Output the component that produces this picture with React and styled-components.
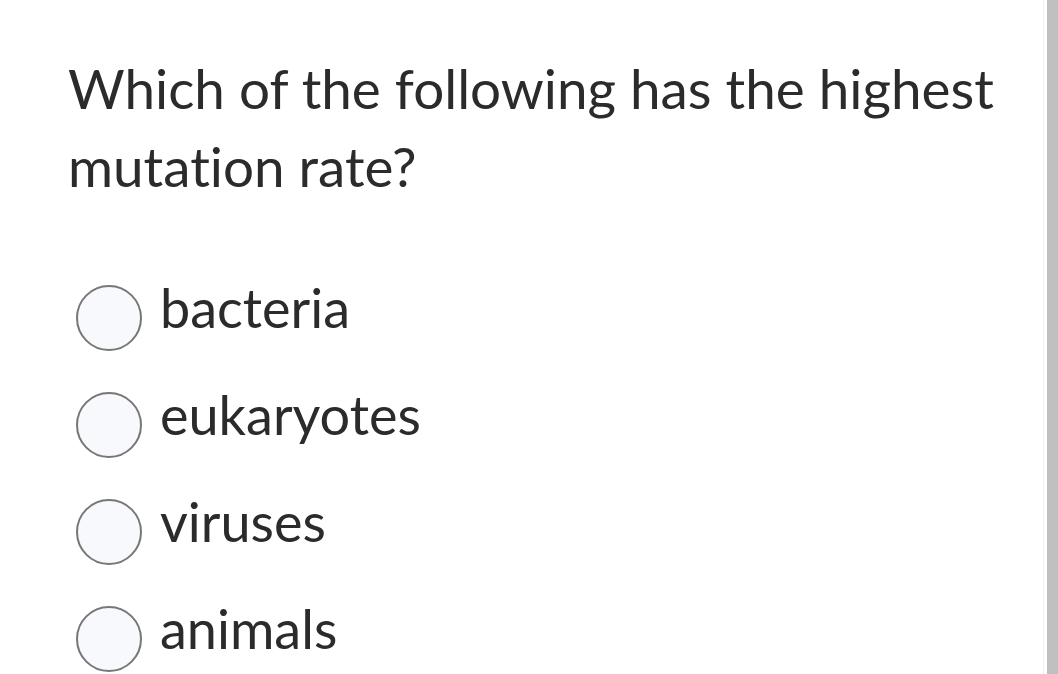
import styled, {createGlobalStyle} from 'styled-components'

const Global = createGlobalStyle`
    html, body {
        margin: 0;
        padding: 0;
        background: #fff;
        overflow: hidden;
    }
`

const Page = styled.div`
    display: flex;
    width: 1058px;
    height: 674px;
    overflow: hidden;
`

const Content = styled.div`
    flex: 1;
    padding: 49px 0 0 68px;
    font-family: Lato, "Noto Sans", sans-serif;
    font-variant-ligatures: none;
    color: #2b2b2b;
`

const Question = styled.div`
    font-size: 54.8px;
    line-height: 78px;
    margin-bottom: 80px;
`

const Options = styled.div`
    display: flex;
    flex-direction: column;
    gap: 41px;
    padding-left: 8px;
`

const Option = styled.label`
    display: flex;
    align-items: center;
    gap: 18px;
    height: 66px;
`

const Radio = styled.span`
    box-sizing: border-box;
    width: 66px;
    height: 66px;
    border-radius: 50%;
    border: 2px solid #777;
    background: #f8f9fd;
    flex-shrink: 0;
`

const Label = styled.span`
    font-size: 54px;
    line-height: 64px;
    padding-bottom: 20px;
`

const Track = styled.div`
    width: 14px;
    border-left: 1px solid #f0f0f0;
    display: flex;
    justify-content: flex-end;
`

const Thumb = styled.div`
    width: 11px;
    height: 100%;
    background: #c0c0c0;
`

const answers = ['bacteria', 'eukaryotes', 'viruses', 'animals']

export default function App() {
    return (
        <Page>
            <Global/>
            <Content>
                <Question>Which of the following has the highest<br/>mutation rate?</Question>
                <Options>
                    {answers.map(a => (
                        <Option key={a}>
                            <Radio/>
                            <Label>{a}</Label>
                        </Option>
                    ))}
                </Options>
            </Content>
            <Track><Thumb/></Track>
        </Page>
    )
}
